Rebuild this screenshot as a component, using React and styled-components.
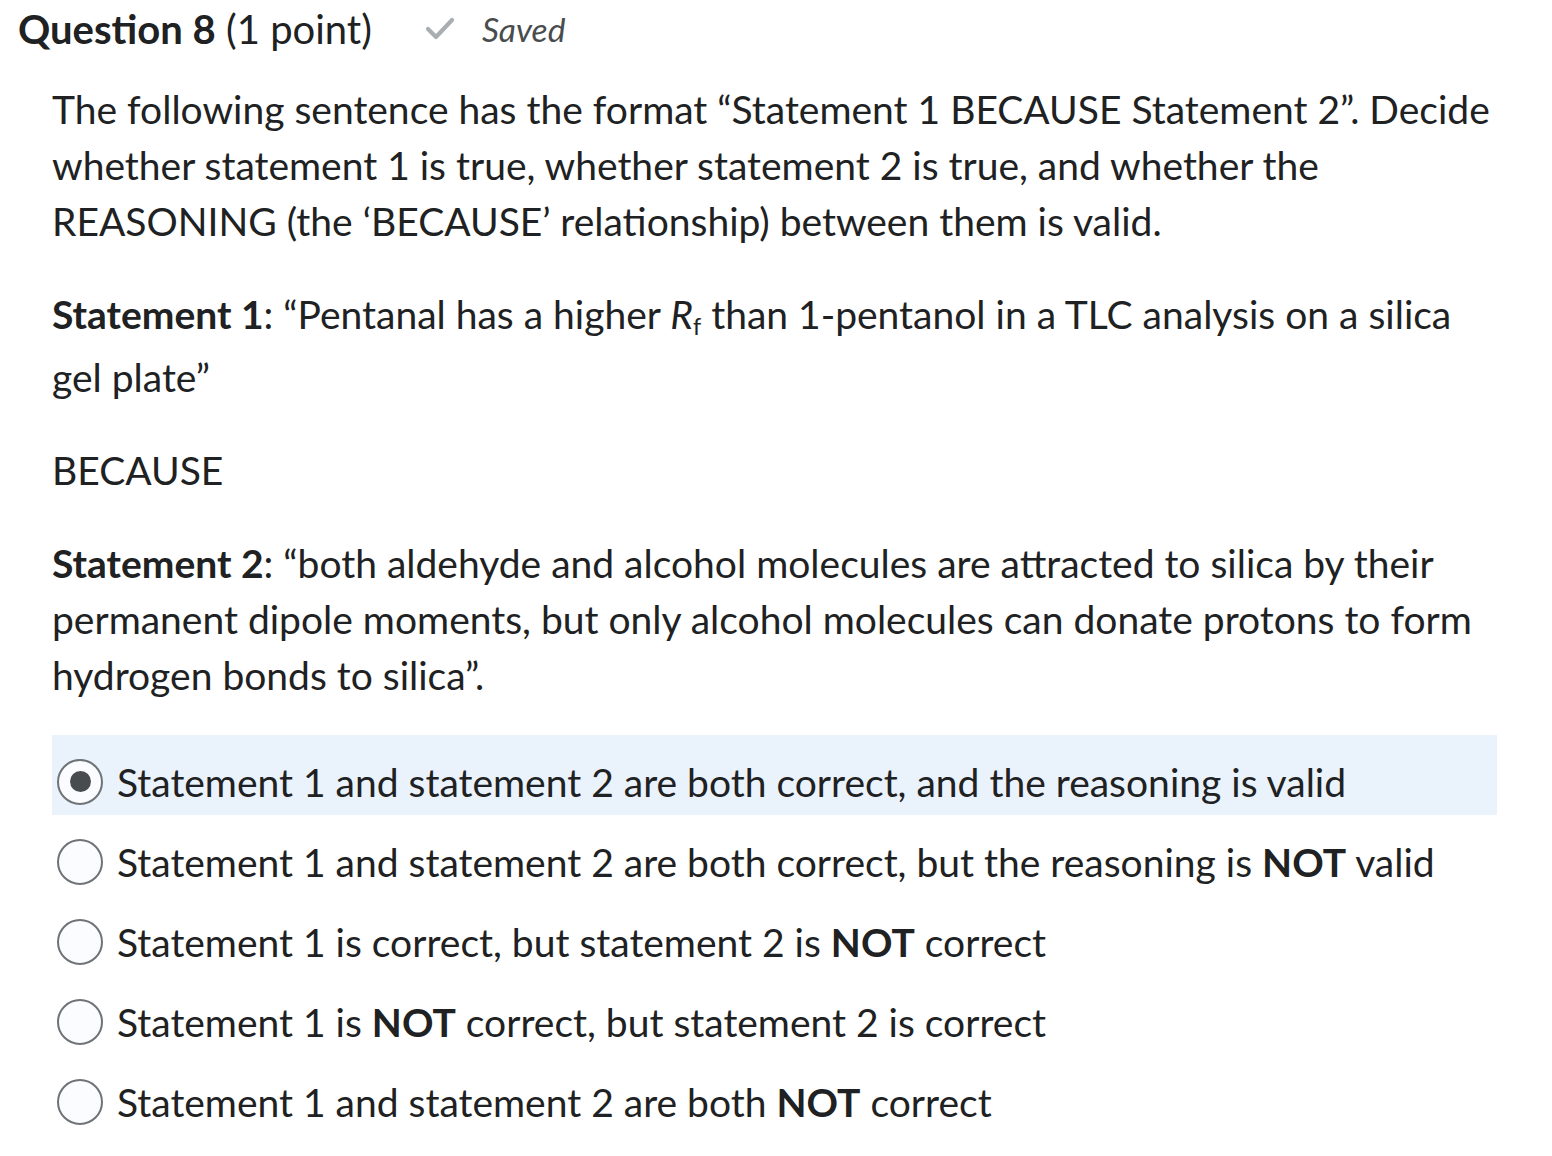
import styled, { createGlobalStyle } from 'styled-components';

const GlobalStyle = createGlobalStyle`
  html, body {
    margin: 0;
    padding: 0;
    background: #fff;
  }
  body {
    font-family: Lato, "Noto Sans", sans-serif;
    color: #202122;
  }
`;

const options = [
  { id: 1, text: <>Statement 1 and statement 2 are both correct, and the reasoning is valid</> },
  { id: 2, text: <>Statement 1 and statement 2 are both correct, but the reasoning is <b>NOT</b> valid</> },
  { id: 3, text: <>Statement 1 is correct, but statement 2 is <b>NOT</b> correct</> },
  { id: 4, text: <>Statement 1 is <b>NOT</b> correct, but statement 2 is correct</> },
  { id: 5, text: <>Statement 1 and statement 2 are both <b>NOT</b> correct</> },
];

function App() {
  const selected = 1;

  return (
    <Page>
      <GlobalStyle />
      <Header>
        <Title>
          <strong>Question 8</strong> (1 point)
        </Title>
        <SavedBox>
          <svg width="30" height="24" viewBox="0 0 30 24">
            <path d="M3 12 L11 20 L27 3" fill="none" stroke="#a9aeb1" strokeWidth="4.2" strokeLinecap="round" strokeLinejoin="round" />
          </svg>
          <SavedText>Saved</SavedText>
        </SavedBox>
      </Header>

      <Body>
        <Para>
          The following sentence has the format “Statement 1 BECAUSE Statement 2”. Decide whether statement 1 is true,
          whether statement 2 is true, and whether the REASONING (the ‘BECAUSE’ relationship) between them is valid.
        </Para>
        <Para>
          <b>Statement 1</b>: “Pentanal has a higher <i>R</i><Sub>f</Sub> than 1-pentanol in a TLC analysis on a silica gel plate”
        </Para>
        <Para>BECAUSE</Para>
        <Para>
          <b>Statement 2</b>: “both aldehyde and alcohol molecules are attracted to silica by their permanent dipole moments,
          but only alcohol molecules can donate protons to form hydrogen bonds to silica”.
        </Para>

        <OptionList>
          {options.map((o) => (
            <Option key={o.id} $active={o.id === selected}>
              <Radio $checked={o.id === selected} />
              <OptionText>{o.text}</OptionText>
            </Option>
          ))}
        </OptionList>
      </Body>
    </Page>
  );
}

export default App;

const Page = styled.div`
  padding: 4px 0 20px 18px;
  width: 1534px;
`;

const Header = styled.div`
  display: flex;
  align-items: center;
  gap: 53px;
  height: 50px;
`;

const Title = styled.h1`
  margin: 0;
  font-size: 40px;
  font-weight: 400;
  line-height: 50px;
  color: #202122;

  strong {
    font-weight: 700;
  }
`;

const SavedBox = styled.div`
  display: flex;
  align-items: center;
  gap: 27px;
`;

const SavedText = styled.span`
  font-size: 33.5px;
  font-style: italic;
  color: #494c4e;
`;

const Body = styled.div`
  padding-left: 34px;
  width: 1445px;
  margin-top: 27px;
`;

const Para = styled.p`
  margin: 0;
  font-size: 39px;
  line-height: 56px;

  & + & {
    margin-top: 37px;
  }
`;

const Sub = styled.sub`
  font-size: 0.6em;
  vertical-align: -6px;
  line-height: 46px;
`;

const OptionList = styled.div`
  display: flex;
  flex-direction: column;
  margin-top: 32px;
`;

const Option = styled.label`
  box-sizing: border-box;
  display: flex;
  align-items: center;
  gap: 14px;
  height: 80px;
  padding: 13px 0 0 5px;
  background: ${(p) => (p.$active ? '#eaf2fc' : 'transparent')};
`;

const Radio = styled.span`
  box-sizing: border-box;
  width: 46px;
  height: 46px;
  flex: none;
  border-radius: 50%;
  border: 2px solid #6e7376;
  background: #fbfcff;
  display: flex;
  align-items: center;
  justify-content: center;

  &::after {
    content: '';
    width: 21px;
    height: 21px;
    border-radius: 50%;
    background: #494c4e;
    display: ${(p) => (p.$checked ? 'block' : 'none')};
  }
`;

const OptionText = styled.span`
  font-size: 39px;
  line-height: 56px;
  color: #202122;
`;
